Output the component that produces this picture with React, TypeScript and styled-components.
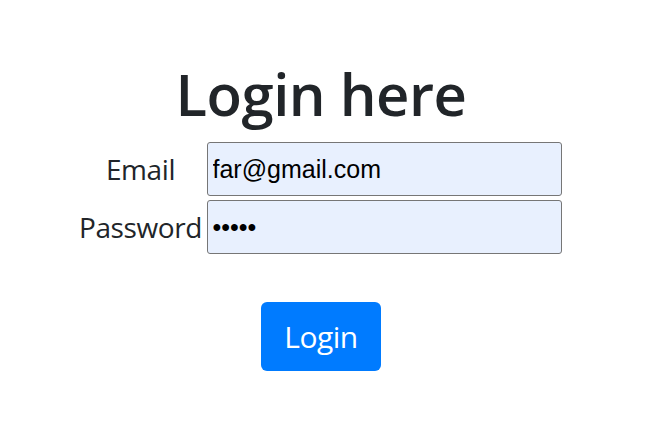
import React from "react";
import styled, { createGlobalStyle } from "styled-components";

const Global = createGlobalStyle`
  html, body { margin: 0; padding: 0; background: #ffffff; }
  body { font-family: "Open Sans", "Noto Sans", sans-serif; color: #212529; }
`;

const Page = styled.div`
  width: 642px;
  display: flex;
  flex-direction: column;
  align-items: center;
  padding-top: 52px;
`;

const Title = styled.h1`
  margin: 0 0 6px;
  font-size: 58px;
  font-weight: 600;
  line-height: 84px;
  letter-spacing: -0.5px;
`;

const Form = styled.form`
  display: flex;
  flex-direction: column;
  align-items: center;
`;

const Fields = styled.div`
  display: grid;
  grid-template-columns: 126px 355px;
  column-gap: 3px;
  row-gap: 4px;
  margin-right: 3px;
`;

const Label = styled.label`
  display: flex;
  align-items: center;
  justify-content: center;
  font-size: 28px;
  letter-spacing: -0.4px;
  white-space: nowrap;
`;

const Input = styled.input`
  box-sizing: border-box;
  width: 355px;
  height: 54px;
  margin: 0;
  padding: 0 5px;
  border: 1px solid #767676;
  border-radius: 3px;
  background: #e8f0fe;
  color: #000;
  font-family: "Liberation Sans", Arial, sans-serif;
  font-size: 25px;
  outline: none;
`;

const Button = styled.button`
  margin-top: 48px;
  width: 120px;
  height: 69px;
  border: none;
  border-radius: 6px;
  background: #007bff;
  color: #ffffff;
  font-family: "Open Sans", "Noto Sans", sans-serif;
  font-size: 30px;
  letter-spacing: -0.5px;
  cursor: pointer;
`;

export default function App() {
  return (
    <>
      <Global />
      <Page>
        <Title>Login here</Title>
        <Form onSubmit={(e) => e.preventDefault()}>
          <Fields>
            <Label htmlFor="email">Email</Label>
            <Input id="email" type="text" defaultValue="far@gmail.com" />
            <Label htmlFor="password">Password</Label>
            <Input id="password" type="password" defaultValue="12345" />
          </Fields>
          <Button type="submit">Login</Button>
        </Form>
      </Page>
    </>
  );
}
